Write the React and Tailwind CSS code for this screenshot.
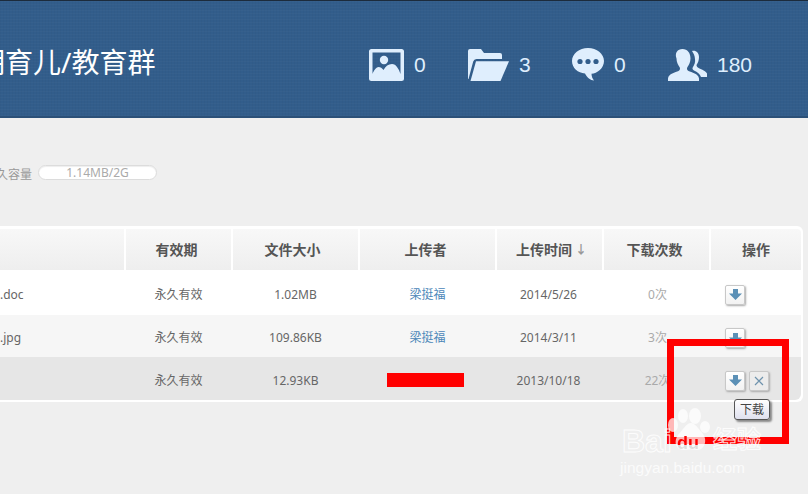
import React from "react";

const cols = "grid grid-cols-[126px_107px_127px_137px_107px_107px_90px]";
const cjk = "font-['Noto_Sans','Noto_Sans_CJK_SC',sans-serif]";

function ImageIcon() {
  return (
    <svg width="35" height="32" viewBox="0 0 35 32" fill="#dfeefd">
      <path fillRule="evenodd" d="M2.500 0h30a2.500 2.500 0 0 1 2.500 2.500v27a2.500 2.500 0 0 1-2.500 2.500h-30A2.500 2.500 0 0 1 0 29.500v-27A2.500 2.500 0 0 1 2.500 0zM3.500 3.500V25C4.500 22 7 18 9.500 18c2 0 3.500 1 5 3 2-4 5-6 8.500-6 4 0 7 5 8.500 10V3.500z" />
      <circle cx="15" cy="11" r="4.200" />
    </svg>
  );
}
function FolderIcon() {
  return (
    <svg width="41" height="32" viewBox="0 0 41 32" fill="#dfeefd">
      <path d="M0 2a2 2 0 0 1 2-2h11l3 4h16a2 2 0 0 1 2 2v4H8.500Q6 10 5.200 12.500L.5 30H0z" />
      <path d="M8 12.300h33L32.500 32H2.500z" />
    </svg>
  );
}
function ChatIcon() {
  return (
    <svg width="32" height="33" viewBox="0 0 32 33">
      <path fill="#dfeefd" d="M16 0c8.800 0 16 5.800 16 13s-7 12.700-12.500 12.800c0 2.500 1 5 2.500 6.700-3.500-.2-7-3-9-7C6 25 0 20 0 13 0 5.800 7.200 0 16 0z" />
      <circle cx="8" cy="13.500" r="2.600" fill="#325d8b" />
      <circle cx="16" cy="13.500" r="2.600" fill="#325d8b" />
      <circle cx="24" cy="13.500" r="2.600" fill="#325d8b" />
    </svg>
  );
}
function UsersIcon() {
  return (
    <svg width="40" height="32" viewBox="0 0 40 32" fill="#dfeefd">
      <path d="M25 2c4-1 7 2 7 6 0 3-1 6-2.500 8 0 1.500 1 2.500 3 3.500 3 1.500 6.500 2.500 7.500 5V28h-6c-1-3-3.500-5-7-6.500-1.500-.7-2-2-1-3.500 1.500-2.500 2.500-5 2-8-.2-3-1.200-5.500-3-8z" />
      <path d="M15.500 0c5 0 8 4 8 9.500 0 3.500-1.500 6.500-3 8.500-1 1.500-.5 3 1 4 3 1.500 10 2.500 10.500 7.500V32H1v-2.500c.5-5 7.500-6 10.500-7.500 1.500-1 2-2.500 1-4-1.500-2-3-5-3-8.500C7.500 4 10.500 0 15.500 0z" />
    </svg>
  );
}

function Stat({ icon, value, className }) {
  return (
    <div className={`flex items-center gap-[10px] ${className}`}>
      {icon}
      <span className="font-['Liberation_Sans',sans-serif] text-[21px] leading-none text-[#dfeefd]">{value}</span>
    </div>
  );
}

function Arrow() {
  return (
    <svg width="13" height="11" viewBox="0 0 13 11" fill="#5b90b6">
      <path d="M4 0h5v4.500h4L6.500 11 0 4.500h4z" />
    </svg>
  );
}

function Btn({ children, plain }) {
  return (
    <div className={`flex h-[20px] w-[20px] items-center justify-center rounded-[2px] border border-[#c8c8c8] shadow-[1px_1px_2px_#aaa] ${plain ? "bg-[#ececec]" : "bg-[linear-gradient(#ffffff,#f2f2f2)]"}`}>
      {children}
    </div>
  );
}

function Head({ children, last, className = "" }) {
  return (
    <div className={`flex h-[41px] items-center justify-center bg-[linear-gradient(#f8f8f8,#eeeeee)] text-[14px] font-bold text-[#555] ${last ? "rounded-tr-[4px]" : "mr-[2px]"} ${className}`}>
      {children}
    </div>
  );
}

function Row({ bg, h, name, size, who, date, count, actions, round }) {
  const cell = "flex items-center justify-center pt-[4px] text-[12px] text-[#666]";
  return (
    <div className={`${cols} ${bg} ${h} ${round ? "rounded-br-[6px]" : ""}`}>
      <div className={`${cell} !justify-start`}>{name}</div>
      <div className={`${cell} pr-[2px]`}>永久有效</div>
      <div className={`${cell} pr-[2px]`}>{size}</div>
      <div className={`${cell} pr-[2px]`}>{who}</div>
      <div className={`${cell} pr-[4px]`}>{date}</div>
      <div className={`${cell} !text-[#aaa]`}>{count}</div>
      <div className="flex items-center gap-[4px] pt-[4px] pl-[14px]">{actions}</div>
    </div>
  );
}

const Who = <span className="text-[#4a86b8]">梁挺福</span>;
const hollow = "text-transparent [-webkit-text-stroke:1px_rgba(255,255,255,0.85)]";

export default function App() {
  return (
    <div className={`relative h-[494px] w-[808px] overflow-hidden bg-[#efefef] ${cjk}`}>
      <header className="flex h-[118px] items-center border-t border-[#1c2b3c] border-b-2 border-b-[#2b5078] bg-[#325d8b] bg-[repeating-linear-gradient(0deg,rgba(255,255,255,0.02)_0_1px,transparent_1px_3px),repeating-linear-gradient(90deg,rgba(0,0,0,0.025)_0_1px,transparent_1px_3px)] pt-[12px]">
        <h1 className="mb-[6px] ml-[-23px] w-[392px] shrink-0 whitespace-nowrap text-[28px] leading-none font-normal text-white">期育儿/教育群</h1>
        <Stat icon={<ImageIcon />} value="0" className="w-[99px]" />
        <Stat icon={<FolderIcon />} value="3" className="w-[104px]" />
        <Stat icon={<ChatIcon />} value="0" className="w-[95px]" />
        <Stat icon={<UsersIcon />} value="180" />
      </header>

      <div className="mt-[47px] flex h-[15px] items-center">
        <span className="ml-[-16px] w-[54px] shrink-0 whitespace-nowrap pt-[5px] text-[12px] leading-none text-[#999]">永久容量</span>
        <div className="flex h-[15px] w-[119px] items-center justify-center rounded-full border border-[#dcdcdc] bg-white pt-[1px] text-[12px] leading-none text-[#aaa] shadow-[inset_0_1px_1px_#eee]">
          1.14MB/2G
        </div>
      </div>

      <div className="mt-[46px] w-[803px] rounded-r-[6px] bg-white pt-[3px] pr-[2px] pb-[2px]">
        <div className={cols}>
          <Head />
          <Head className="pr-[4px]">有效期</Head>
          <Head className="pr-[6px]">文件大小</Head>
          <Head className="pr-[4px]">上传者</Head>
          <Head className="pl-[4px]">
            上传时间<span className="ml-[3px] text-[12px] font-bold text-[#999]">↓</span>
          </Head>
          <Head className="pr-[4px]">下载次数</Head>
          <Head last>操作</Head>
        </div>
        <Row bg="bg-white" h="h-[45px]" name=".doc" size="1.02MB" who={Who} date="2014/5/26" count="0次"
          actions={<Btn><Arrow /></Btn>} />
        <Row bg="bg-[#f6f6f6]" h="h-[42px]" name=".jpg" size="109.86KB" who={Who} date="2014/3/11" count="3次"
          actions={<Btn><Arrow /></Btn>} />
        <Row bg="bg-[#e6e6e6]" h="h-[43px]" round name="" size="12.93KB"
          who={<span className="mr-[4px] mb-[1px] h-[14px] w-[77px] bg-[#ff0000]" />}
          date="2013/10/18" count="22次"
          actions={
            <>
              <Btn><Arrow /></Btn>
              <Btn plain>
                <svg width="10" height="10" viewBox="0 0 10 10" stroke="#6f93ad" strokeWidth="1.200"><path d="M1 1l8 8M9 1l-8 8" /></svg>
              </Btn>
            </>
          } />
      </div>

      <div className="absolute left-[667px] top-[339px] h-[105px] w-[122px] border-[7px] border-[#ff0000]" />

      <div className="absolute left-[734px] top-[399px] flex h-[21px] w-[36px] items-center justify-center rounded-[3px] border border-[#555] bg-[linear-gradient(#ffffff,#dfe0ee)] text-[12px] leading-none text-[#444] shadow-[2px_2px_2px_#888]">
        下载
      </div>

      <div className="absolute left-[620px] top-[408px] h-[70px] w-[150px]">
        <svg className="absolute left-[48px] top-0" width="42" height="44" viewBox="0 0 42 44" fill="#fff" fillOpacity="0.72">
          <ellipse cx="5" cy="17" rx="5" ry="7" />
          <ellipse cx="15" cy="8" rx="5" ry="7" />
          <ellipse cx="27" cy="8" rx="6" ry="8" />
          <ellipse cx="37" cy="19" rx="5" ry="6" />
          <path d="M23 15c4 0 7 5 12 11 5 7 1 17-7 16-4-.5-7-1-11 0-9 1-12-8-7-15 5-5 8-12 13-12z" />
        </svg>
        <span className={`absolute left-[2px] top-[17px] text-[32px] leading-none font-bold font-['Liberation_Sans',sans-serif] ${hollow}`}>Bai</span>
        <span className="absolute left-[57px] top-[26px] bg-[linear-gradient(#ff0000_0_62%,#dddddd_62%)] bg-clip-text text-[18px] leading-none font-bold text-transparent font-['Liberation_Sans',sans-serif]">du</span>
        <span className={`absolute left-[93px] top-[19px] text-[24px] leading-none font-bold ${hollow}`}>经验</span>
        <span className="absolute left-0 top-[52px] whitespace-nowrap text-[15.500px] leading-none text-white/75 font-['Liberation_Sans',sans-serif]">jingyan.baidu.com</span>
      </div>
    </div>
  );
}
